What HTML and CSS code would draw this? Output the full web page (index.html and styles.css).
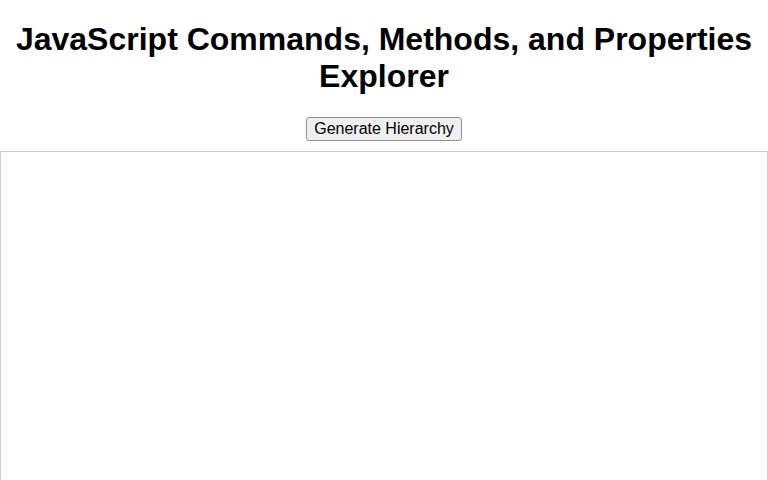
FILE: index.html
```html
<!DOCTYPE html>
<html>
<head>
<meta charset="utf-8">
<link rel="stylesheet" href="styles.css">
</head>
<body>
<h1 class="title">JavaScript Commands, Methods, and Properties Explorer</h1>
<div class="controls"><button class="gen-btn">Generate Hierarchy</button></div>
<div class="tree"><div class="tree-inner"></div></div>
</body>
</html>
```
FILE: styles.css
```css
html, body {
  margin: 0;
  padding: 0;
  background: #fff;
  font-family: "Liberation Sans", Arial, sans-serif;
}
.title {
  font-size: 32px;
  font-weight: bold;
  text-align: center;
  margin: 21px 0 21.5px;
  color: #000;
}
.controls {
  display: flex;
  justify-content: center;
}
.gen-btn {
  font-family: "Liberation Sans", Arial, sans-serif;
  font-size: 16px;
  line-height: 18px;
  padding: 2px 7px;
  background: #efefef;
  border: 1px solid #8f8f8f;
  border-radius: 3px;
  color: #000;
}
.tree {
  margin-top: 10px;
  border: 1px solid #ccc;
  padding: 0 5px;
  height: 600px;
}
.tree-inner {
  height: 100%;
  border-left: 1px solid #f6f6f6;
  border-right: 1px solid #f6f6f6;
}
```
